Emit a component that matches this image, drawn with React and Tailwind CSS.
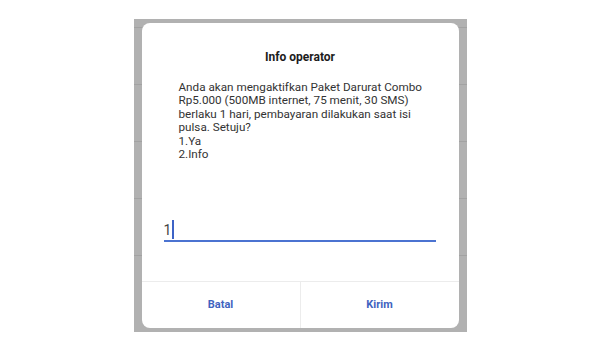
import React from 'react';

const font = { fontFamily: 'Roboto, "Noto Sans", sans-serif' };

function App() {
    const rows = [9, 57, 57, 57, 57];

    return (
        <div className="w-[600px] h-[350px] bg-white flex justify-center pt-[19px]" style={font}>
            <div className="relative w-[333px] h-[313px] bg-[#b1b1b1]">
                {rows.map((h, i) => (
                    <div key={i} className="border-b border-[#a2a2a2]" style={{ height: h }} />
                ))}

                {/* dialog */}
                <div className="absolute left-[8px] right-[8px] top-[4px] bottom-[4px] bg-white rounded-[8px] flex flex-col">
                    <div className="h-[258px] flex flex-col">
                        <h2 className="pt-[26px] text-center text-[12px] font-bold text-[#1c1c1c] leading-[16px]">
                            Info operator
                        </h2>
                        <div className="mt-[16px] pl-[37px] pr-[28px] text-[11.7px] leading-[13.4px] text-[#333333]">
                            <p>Anda akan mengaktifkan Paket Darurat Combo Rp5.000 (500MB internet, 75 menit, 30 SMS) berlaku 1 hari, pembayaran dilakukan saat isi pulsa. Setuju?</p>
                            <p>1.Ya</p>
                            <p>2.Info</p>
                        </div>
                        <div className="mt-auto ml-[22px] mr-[23px] mb-[39px] border-b-2 border-[#4b73d1] pb-[1px] flex items-end">
                            <span className="text-[14px] leading-[18px] text-[#444444]">1</span>
                            <span className="ml-[1px] w-[2px] h-[19px] bg-[#3d63c6]" />
                        </div>
                    </div>
                    <div className="flex-1 border-t border-[#ececec] flex">
                        <button className="flex-1 text-[11px] font-bold text-[#3f63c0]">Batal</button>
                        <div className="w-px bg-[#ececec]" />
                        <button className="flex-1 text-[11px] font-bold text-[#3f63c0]">Kirim</button>
                    </div>
                </div>
            </div>
        </div>
    );
}

export default App;
